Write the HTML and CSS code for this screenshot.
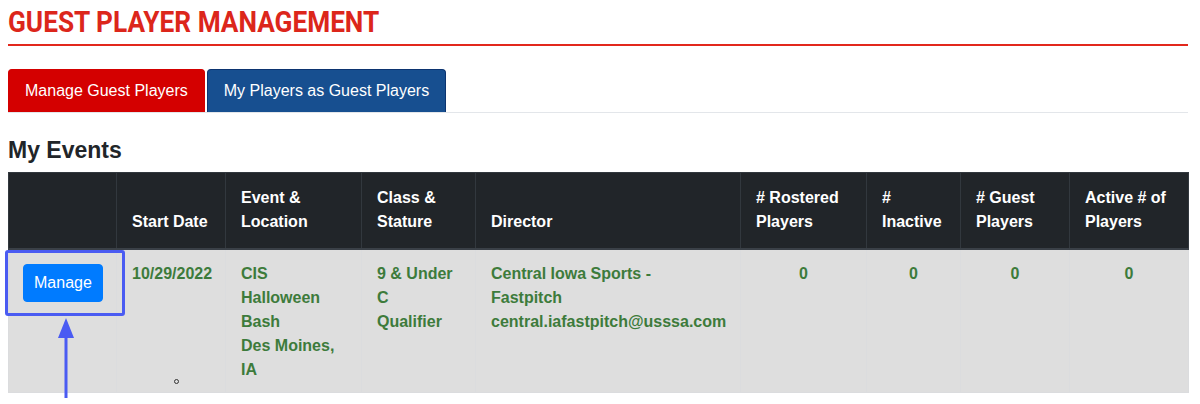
FILE: index.html
```html
<!DOCTYPE html>
<html lang="en">
<head>
<meta charset="utf-8">
<title>Guest Player Management</title>
<link rel="stylesheet" href="styles.css">
</head>
<body>
<div class="page">
  <h1 class="page-title"><span class="page-title-text">GUEST PLAYER MANAGEMENT</span></h1>

  <ul class="tabs">
    <li class="tab tab-red">Manage Guest Players</li>
    <li class="tab tab-blue">My Players as Guest Players</li>
  </ul>

  <h2 class="section-title">My Events</h2>

  <div class="table-wrap">
    <table class="events">
      <colgroup>
        <col style="width:108px">
        <col style="width:109px">
        <col style="width:136px">
        <col style="width:114px">
        <col style="width:265px">
        <col style="width:126px">
        <col style="width:94px">
        <col style="width:109px">
        <col style="width:119px">
      </colgroup>
      <thead>
        <tr>
          <th></th>
          <th>Start Date</th>
          <th>Event &amp;<br>Location</th>
          <th>Class &amp;<br>Stature</th>
          <th>Director</th>
          <th># Rostered<br>Players</th>
          <th>#<br>Inactive</th>
          <th># Guest<br>Players</th>
          <th>Active # of<br>Players</th>
        </tr>
      </thead>
      <tbody>
        <tr>
          <td class="cell-action"><button class="btn-manage" type="button">Manage</button></td>
          <td class="cell-date">10/29/2022<span class="dot"></span></td>
          <td>CIS<br>Halloween<br>Bash<br>Des Moines,<br>IA</td>
          <td>9 &amp; Under<br>C<br>Qualifier</td>
          <td>Central Iowa Sports -<br>Fastpitch<br>central.iafastpitch@usssa.com</td>
          <td class="num">0</td>
          <td class="num">0</td>
          <td class="num">0</td>
          <td class="num">0</td>
        </tr>
      </tbody>
    </table>
    <div class="highlight-box"></div>
    <svg class="arrow" width="20" height="80" viewBox="0 0 20 80" aria-hidden="true">
      <polygon points="10,0 2,20 18,20" fill="#4a5bf2"/>
      <rect x="8.5" y="18" width="3" height="62" fill="#4a5bf2"/>
    </svg>
  </div>
</div>
</body>
</html>
```
FILE: styles.css
```css
html, body {
  margin: 0;
  padding: 0;
  background: #ffffff;
}
body {
  padding: 8px;
  font-family: "Liberation Sans", Arial, sans-serif;
  font-size: 16px;
  line-height: 24px;
  color: #212529;
}
.page {
  width: 1180px;
}
.page-title {
  margin: 0;
  padding: 0 0 9px 0;
  border-bottom: 2px solid #e2281c;
  height: 27px;
  overflow: visible;
}
.page-title-text {
  display: inline-block;
  font-family: Roboto, "Liberation Sans", sans-serif;
  font-weight: 700;
  font-size: 29px;
  line-height: 29px;
  color: #dc261b;
  transform: scaleX(0.904);
  transform-origin: left center;
  white-space: nowrap;
}
.tabs {
  list-style: none;
  margin: 23px 0 0 0;
  padding: 0;
  display: flex;
  gap: 2px;
  border-bottom: 1px solid #e3e6ea;
}
.tab {
  padding: 9px 16px;
  line-height: 24px;
  color: #ffffff;
  font-size: 16px;
  border-radius: 4px 4px 0 0;
  border: 1px solid transparent;
  border-bottom: none;
}
.tab-red {
  background: #d40000;
  border-color: #d40000;
}
.tab-blue {
  background: #174f90;
  border-color: #0c3470;
}
.section-title {
  margin: 23px 0 8px 0;
  font-size: 23px;
  line-height: 28px;
  font-weight: 700;
  color: #212529;
}
.table-wrap {
  position: relative;
}
.events {
  width: 1180px;
  table-layout: fixed;
  border-collapse: collapse;
}
.events th {
  background: #212529;
  color: #ffffff;
  font-weight: 700;
  text-align: left;
  vertical-align: bottom;
  padding: 13px 15px 14px 15px;
  border: 1px solid #32383e;
  border-bottom: 2px solid #3a4047;
}
.events td {
  background: #dedede;
  color: #3d7b3b;
  font-weight: 700;
  vertical-align: top;
  padding: 12px 15px 10px 15px;
  border: 1px solid #dbdcde;
  border-top: none;
}
.events td.num {
  text-align: center;
}
.cell-date {
  position: relative;
}
.dot {
  position: absolute;
  left: 57px;
  top: 129px;
  width: 3px;
  height: 3px;
  border: 1px solid #333;
  border-radius: 50%;
}
.events td.cell-action {
  padding-left: 14px;
}
.btn-manage {
  display: block;
  margin: 2px 0 0 0;
  padding: 6px 10px;
  font-family: "Liberation Sans", Arial, sans-serif;
  font-size: 16px;
  line-height: 24px;
  color: #ffffff;
  background: #007bff;
  border: 1px solid #007bff;
  border-radius: 4px;
}
.highlight-box {
  position: absolute;
  left: -3px;
  top: 78px;
  width: 114px;
  height: 60px;
  border: 3px solid #4a5bf2;
  border-radius: 3px;
}
.arrow {
  position: absolute;
  left: 48px;
  top: 146px;
}
```
